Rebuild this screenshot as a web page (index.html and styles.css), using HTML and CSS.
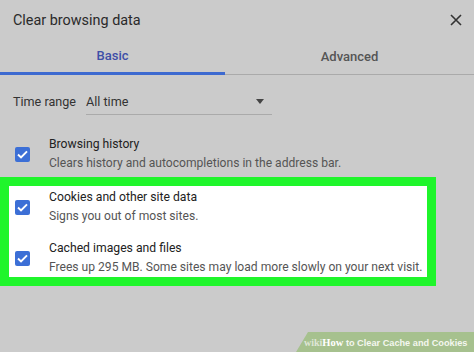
FILE: index.html
```html
<!DOCTYPE html>
<html>
<head>
<meta charset="utf-8">
<link rel="stylesheet" href="styles.css">
</head>
<body>
<div class="page">
  <div class="header">
    <div class="title">Clear browsing data</div>
    <svg class="close" width="12" height="12" viewBox="0 0 12 12"><path d="M1 1L11 11M11 1L1 11" stroke="#333" stroke-width="1.6" fill="none"/></svg>
  </div>
  <div class="tabs">
    <div class="tab active">Basic</div>
    <div class="tab">Advanced</div>
  </div>
  <div class="timerow">
    <span class="label">Time range</span>
    <div class="select">
      <span>All time</span>
      <svg class="arrow" width="8" height="5" viewBox="0 0 8 5"><path d="M0 0H8L4 5Z" fill="#444"/></svg>
    </div>
  </div>
  <div class="item first">
    <span class="cb"><svg width="11" height="9" viewBox="0 0 11 9"><path d="M1 4.6L4 7.4L10 1.4" stroke="#fff" stroke-width="2" fill="none"/></svg></span>
    <div class="txt">
      <div class="t">Browsing history</div>
      <div class="s">Clears history and autocompletions in the address bar.</div>
    </div>
  </div>
  <div class="highlight">
    <div class="item">
      <span class="cb"><svg width="11" height="9" viewBox="0 0 11 9"><path d="M1 4.6L4 7.4L10 1.4" stroke="#fff" stroke-width="2" fill="none"/></svg></span>
      <div class="txt">
        <div class="t">Cookies and other site data</div>
        <div class="s">Signs you out of most sites.</div>
      </div>
    </div>
    <div class="item">
      <span class="cb"><svg width="11" height="9" viewBox="0 0 11 9"><path d="M1 4.6L4 7.4L10 1.4" stroke="#fff" stroke-width="2" fill="none"/></svg></span>
      <div class="txt">
        <div class="t">Cached images and files</div>
        <div class="s">Frees up 295 MB. Some sites may load more slowly on your next visit.</div>
      </div>
    </div>
  </div>
  <div class="wm"><span class="wiki">wiki</span><span class="how">How</span> to Clear Cache and Cookies</div>
</div>
</body>
</html>
```
FILE: styles.css
```css
html, body { margin: 0; padding: 0; }
body { width: 474px; height: 352px; overflow: hidden; background: #cbcbcb; font-family: Roboto, "Liberation Sans", sans-serif; }
.page { position: relative; width: 474px; height: 352px; }
.header { height: 38px; display: flex; align-items: center; justify-content: space-between; padding: 0 12px 0 13px; }
.title { font-size: 14.4px; color: #2a2a2a; padding-top: 2px; }
.close { display: block; margin-top: 1px; }
.tabs { display: flex; height: 37px; }
.tab { display: flex; align-items: center; justify-content: center; font-size: 13px; font-weight: 500; color: #555; box-sizing: border-box; }
.tab.active { width: 225px; color: #3e4fa8; border-bottom: 3px solid #3d6ad0; }
.tab:not(.active) { flex: 1; border-bottom: 1px solid #aaa; height: 35px; margin-top: 2px; padding-bottom: 2px; }
.timerow { display: flex; align-items: center; margin-top: 12px; height: 28px; padding-left: 13px; font-size: 12.6px; color: #333; }
.label { width: 73px; }
.select { width: 186px; height: 26px; border-bottom: 1px solid #aaa; display: flex; align-items: center; justify-content: space-between; padding-right: 8px; box-sizing: border-box; margin-top: 1px; }
.arrow { display: block; }
.item { display: flex; align-items: center; height: 38px; padding-left: 15px; }
.item.first { margin-top: 20px; }
.cb { width: 15px; height: 15px; border-radius: 2px; background: #3c6fd6; display: flex; align-items: center; justify-content: center; flex-shrink: 0; }
.cb svg { display: block; }
.txt { margin-left: 19px; }
.t { font-size: 12.2px; line-height: 19px; color: #222; }
.s { font-size: 12.1px; line-height: 19px; color: #555; white-space: nowrap; }
.highlight { margin-top: 4px; width: 436px; box-sizing: border-box; border: 9px solid #1ff52b; background: #fff; padding-top: 2px; }
.highlight .item { padding-left: 6px; }
.highlight .item + .item { margin-top: 13px; }
.wm { position: absolute; right: 0; bottom: 0; height: 20px; width: 178px; background: #a6c18e; clip-path: polygon(12px 0, 100% 0, 100% 100%, 0 100%); color: #f4f7ef; font-family: "Liberation Sans", sans-serif; font-weight: bold; font-size: 9.2px; line-height: 22px; padding-left: 8px; box-sizing: border-box; white-space: nowrap; }
.wiki { font-family: "Liberation Serif", serif; color: #dfe6d6; font-size: 10px; }
.how { font-family: "Liberation Serif", serif; font-size: 10.5px; color: #fff; }
```
